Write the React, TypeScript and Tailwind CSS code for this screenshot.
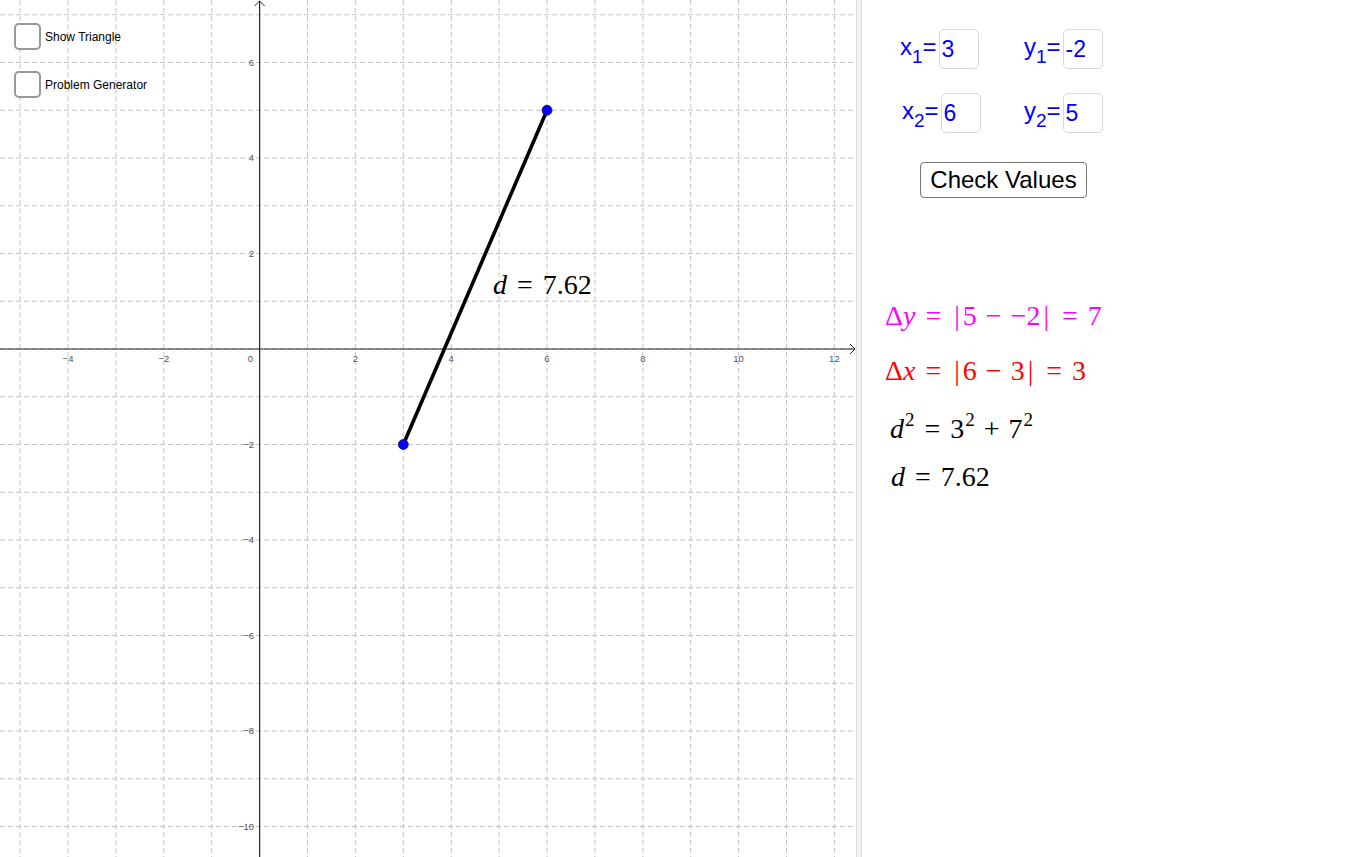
import React from 'react';

const UX = 47.9;
const UY = 47.75;
const OX = 259.6;
const OY = 349;

const toX = (v: number) => OX + v * UX;
const toY = (v: number) => OY - v * UY;

const xs = Array.from({ length: 18 }, (_, i) => i - 5); // -5..12
const ys = Array.from({ length: 18 }, (_, i) => 7 - i); // 7..-10

const fmt = (n: number) => (n < 0 ? '\u2212' + Math.abs(n) : String(n));

const Graph: React.FC = () => (
    <svg width="856" height="857" className="block">
        {xs.map((k) => (
            <line key={'v' + k} x1={toX(k)} y1={0} x2={toX(k)} y2={857} stroke="#c4c4c4" strokeWidth="1" strokeDasharray="5 3" />
        ))}
        {ys.map((k) => (
            <line key={'h' + k} x1={0} y1={toY(k)} x2={856} y2={toY(k)} stroke="#c4c4c4" strokeWidth="1" strokeDasharray="5 3" />
        ))}
        {/* axes */}
        <line x1={0} y1={OY} x2={855} y2={OY} stroke="#252525" strokeWidth="1.2" />
        <line x1={OX} y1={1} x2={OX} y2={857} stroke="#252525" strokeWidth="1.2" />
        <polyline points="850,344 855,349 850,354" fill="none" stroke="#252525" strokeWidth="1" />
        <polyline points={`${OX - 5},6 ${OX},1 ${OX + 5},6`} fill="none" stroke="#252525" strokeWidth="1" />
        {/* tick labels */}
        <g fontFamily="'Liberation Sans', Arial, sans-serif" fontSize="9.5" fill="#555">
            {[-4, -2, 2, 4, 6, 8, 10, 12].map((k) => (
                <text key={'xl' + k} x={toX(k)} y={362} textAnchor="middle">{fmt(k)}</text>
            ))}
            <text x={253} y={362} textAnchor="end">0</text>
            {[6, 4, 2, -2, -4, -6, -8, -10].map((k) => (
                <text key={'yl' + k} x={254} y={toY(k) + 3} textAnchor="end">{fmt(k)}</text>
            ))}
        </g>
        {/* segment */}
        <line x1={toX(3)} y1={toY(-2)} x2={toX(6)} y2={toY(5)} stroke="#000" strokeWidth="3.6" />
        <circle cx={toX(3)} cy={toY(-2)} r="5" fill="#0000ff" stroke="#1a1a4a" strokeWidth="0.8" />
        <circle cx={toX(6)} cy={toY(5)} r="5" fill="#0000ff" stroke="#1a1a4a" strokeWidth="0.8" />
    </svg>
);

const CheckRow: React.FC<{ label: string }> = ({ label }) => (
    <div className="flex items-center gap-[4px]">
        <div className="w-[27px] h-[27px] rounded-[5px] border-2 border-[#999] bg-white" />
        <span className="text-[12px] text-black">{label}</span>
    </div>
);

const VarInput: React.FC<{ v: string; sub: string; value: string }> = ({ v, sub, value }) => (
    <div className="flex items-start">
        <span className="text-[24px] leading-[40px] text-[#0000ff] mt-[-2px]">
            {v}
            <span className="text-[19px] relative top-[8px]">{sub}</span>
            =
        </span>
        <div className="ml-[2px] w-[40px] h-[40px] rounded-[5px] border border-[#d8d8d8] bg-white text-[23px] leading-[38px] text-[#0000ff] pl-[2px]">
            {value}
        </div>
    </div>
);

const Sup: React.FC<{ children: React.ReactNode }> = ({ children }) => (
    <span className="text-[19px] relative top-[-12px] ml-[1px]">{children}</span>
);

const Eq: React.FC = () => <span className="mx-[10px]">=</span>;
const Op: React.FC<{ c: string }> = ({ c }) => <span className="mx-[9px]">{c}</span>;
const Bar: React.FC = () => <span className="mx-[3px]">|</span>;

const App: React.FC = () => {
    return (
        <div className="flex w-[1363px] h-[857px] overflow-hidden bg-white" style={{ fontFamily: "'Liberation Sans', Arial, sans-serif" }}>
            <div className="relative w-[856px] h-[857px] shrink-0">
                <Graph />
                <div className="absolute left-[14px] top-[23px] flex flex-col gap-[21px]">
                    <CheckRow label="Show Triangle" />
                    <CheckRow label="Problem Generator" />
                </div>
                <div
                    className="absolute left-[493px] top-[271px] text-[28px] text-black leading-none whitespace-nowrap"
                    style={{ fontFamily: "'Liberation Serif', 'Times New Roman', serif" }}
                >
                    <span className="italic">d</span>
                    <Eq />7.62
                </div>
            </div>
            <div className="w-[6px] h-full shrink-0 bg-[#f2f2f2] border-x border-[#dedede]" />
            <div className="flex-1 flex flex-col">
                <div className="flex flex-col pl-[38px] pt-[29px] gap-[24px]">
                    <div className="flex">
                        <div className="w-[124px]"><VarInput v="x" sub="1" value="3" /></div>
                        <VarInput v="y" sub="1" value="-2" />
                    </div>
                    <div className="flex ml-[2px]">
                        <div className="w-[122px]"><VarInput v="x" sub="2" value="6" /></div>
                        <VarInput v="y" sub="2" value="5" />
                    </div>
                </div>
                <div className="pl-[58px] pt-[29px]">
                    <button className="w-[167px] h-[36px] rounded-[4px] border border-[#767676] bg-white text-[24px] text-black leading-none">
                        Check Values
                    </button>
                </div>
                <div
                    className="flex flex-col pl-[23px] pt-[103px] text-[28px] leading-[30px] whitespace-nowrap"
                    style={{ fontFamily: "'Liberation Serif', 'Times New Roman', serif" }}
                >
                    <div className="text-[#ff00ff] h-[55px]">
                        Δ<span className="italic">y</span>
                        <Eq /><Bar />5<Op c="−" />−2<Bar />
                        <Eq />7
                    </div>
                    <div className="text-[#ff0000] h-[58px]">
                        Δ<span className="italic">x</span>
                        <Eq /><Bar />6<Op c="−" />3<Bar />
                        <Eq />3
                    </div>
                    <div className="text-black h-[48px] pl-[5px]">
                        <span className="italic">d</span><Sup>2</Sup>
                        <Eq />3<Sup>2</Sup>
                        <Op c="+" />7<Sup>2</Sup>
                    </div>
                    <div className="text-black pl-[6px]">
                        <span className="italic">d</span>
                        <Eq />7.62
                    </div>
                </div>
            </div>
        </div>
    );
};

export default App;
